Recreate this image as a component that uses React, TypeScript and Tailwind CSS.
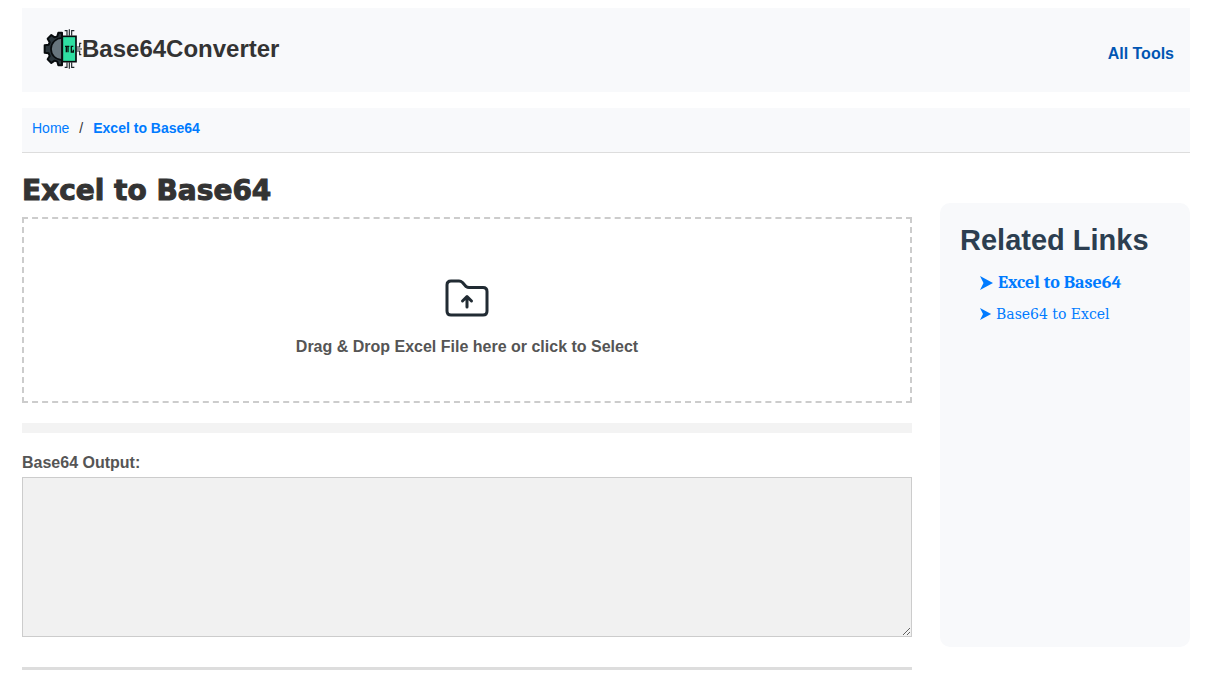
import React, { useState } from "react";

function Logo() {
  return (
    <svg viewBox="0 0 120 120" className="size-10 shrink-0" aria-hidden="true">
      <path
        d="M60 11H49L46 22L38 25L28 18L17 29L23 40L20 47L8 49V71L20 73L23 81L17 91L28 102L38 95L46 98L49 109H60Z"
        fill="#2b363c"
        stroke="#080c0e"
        strokeWidth="6"
        strokeLinejoin="round"
      />
      <path d="M60 27A33 33 0 0 0 60 93Z" fill="#67757d" stroke="#080c0e" strokeWidth="5" />
      <rect x="61" y="22" width="41" height="76" fill="#2fe0a2" stroke="#080c0e" strokeWidth="5" />
      <path
        d="M82 1V20M68 5H75V20M97 5H89V20M82 119V100M68 115H75V100M97 115H89V100M104 60H120M104 54H113V43H118M104 66H113V77H118"
        fill="none"
        stroke="#20272b"
        strokeWidth="3.5"
      />
      <path
        d="M69 52H82M73 52V70M78 52V70M94 52H88V69H94V62"
        fill="none"
        stroke="#07120e"
        strokeWidth="4"
      />
    </svg>
  );
}

function FolderUpload() {
  return (
    <svg viewBox="0 0 44 38" className="h-[38px] w-11" fill="none" stroke="#212b33" strokeWidth="3" strokeLinecap="round" strokeLinejoin="round" aria-hidden="true">
      <path d="M2 6Q2 2 6 2H14Q16 2 17.500 3.500L21 7.500Q22.500 8.500 24 8.500H38Q42 8.500 42 12.500V32Q42 36 38 36H6Q2 36 2 32Z" />
      <path d="M22 28V18M17.500 22L22 17.500L26.500 22" />
    </svg>
  );
}

function Arrow({ className }: { className: string }) {
  return (
    <svg viewBox="0 0 14 14" className={className} fill="currentColor" aria-hidden="true">
      <path d="M0 0L13 7L0 14L3.500 7Z" />
    </svg>
  );
}

export default function App() {
  const [output, setOutput] = useState("");

  const convert = (event: React.ChangeEvent<HTMLInputElement>) => {
    const file = event.target.files?.[0];
    if (!file) return;
    const reader = new FileReader();
    reader.onload = () => setOutput(String(reader.result).split(",")[1] ?? "");
    reader.readAsDataURL(file);
  };

  return (
    <div className="bg-white pt-2 pr-[25px] pl-[22px] font-['Liberation_Sans',Arial,sans-serif] text-[#333]">
      <header className="flex h-[84px] items-center justify-between bg-[#f8f9fb] pr-4 pl-5">
        <a href="#" className="flex items-center pb-0.5 text-2xl font-bold">
          <Logo />
          Base64Converter
        </a>
        <nav className="pt-2">
          <a href="#" className="font-bold text-[#0056b3]">All Tools</a>
        </nav>
      </header>

      <nav aria-label="Breadcrumb" className="mt-4 border-b border-[#ddd] bg-[#f8f9fb] px-2.5 pt-2.5 pb-3.5">
        <ol className="flex items-center text-sm">
          <li><a href="#" className="text-[#007bff]">Home</a></li>
          <li aria-hidden="true" className="px-2.5">/</li>
          <li><a href="#" aria-current="page" className="font-bold text-[#007bff]">Excel to Base64</a></li>
        </ol>
      </nav>

      <div className="flex gap-7">
        <main className="min-w-0 flex-1 pt-5">
          <h1 className="font-['DejaVu_Sans',sans-serif] text-[28px] leading-9 font-bold [-webkit-text-stroke:1px_#333]">Excel to Base64</h1>
          <label className="mt-2 flex h-[186px] cursor-pointer flex-col items-center justify-center gap-[18px] border-2 border-dashed border-[#ccc] pt-[18px] font-bold text-[#555]">
            <FolderUpload />
            Drag &amp; Drop Excel File here or click to Select
            <input type="file" accept=".xls,.xlsx" onChange={convert} className="sr-only" />
          </label>
          <div className="mt-5 h-2.5 bg-[#f3f3f3]" />
          <label htmlFor="output" className="mt-[18px] block font-bold text-[#555]">Base64 Output:</label>
          <textarea id="output" readOnly value={output} className="mt-0.5 block h-40 w-full resize border border-[#ccc] bg-[#f1f1f1] p-2.5 text-sm" />
          <hr className="mt-[30px] border-t-[3px] border-[#ddd]" />
        </main>

        <aside className="mt-[50px] h-[444px] w-[250px] shrink-0 rounded-[10px] bg-[#f8f9fb] p-5">
          <h2 className="text-[29px] leading-[34px] font-bold text-[#2c3e50]">Related Links</h2>
          <ul className="mt-3.5 flex flex-col gap-[7px] pl-5 text-[#007bff]">
            <li>
              <a href="#" className="flex items-center gap-1 font-[Cambria,'Noto_Serif',serif] text-lg leading-6 font-bold">
                <Arrow className="size-3.5" />
                Excel to Base64
              </a>
            </li>
            <li>
              <a href="#" className="flex items-center gap-1 font-['DejaVu_Serif',serif] text-sm leading-6">
                <Arrow className="size-3" />
                Base64 to Excel
              </a>
            </li>
          </ul>
        </aside>
      </div>
    </div>
  );
}
